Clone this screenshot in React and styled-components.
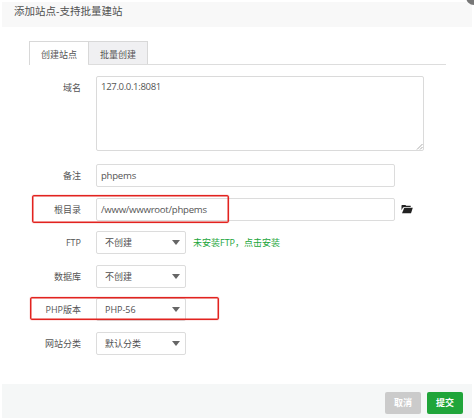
import styled, { createGlobalStyle } from "styled-components";

const selects = [
    { label: "FTP", value: "不创建", tip: "未安装FTP，点击安装" },
    { label: "数据库", value: "不创建" },
    { label: "PHP版本", value: "PHP-56", marked: true },
    { label: "网站分类", value: "默认分类" },
];

function App() {
    return (
        <>
            <GlobalStyle />
            <Dialog>
                <CloseButton />
                <DialogTitle>
                    <TitleText>添加站点-支持批量建站</TitleText>
                </DialogTitle>
                <DialogBody>
                    <TabList>
                        <Tab $active>创建站点</Tab>
                        <Tab>批量创建</Tab>
                    </TabList>
                    <Row $height={88}>
                        <Label>域名</Label>
                        <DomainArea>
                            <LatinText $spacing={-0.36}>127.0.0.1:8081</LatinText>
                            <ResizeGrip viewBox="0 0 7 7">
                                <path d="M1 6.5 6.5 1M4 6.5 6.5 4" />
                            </ResizeGrip>
                        </DomainArea>
                    </Row>
                    <Row $height={33.6}>
                        <Label>备注</Label>
                        <Input>
                            <LatinText $spacing={-0.25}>phpems</LatinText>
                        </Input>
                    </Row>
                    <Row $height={33.6}>
                        <Label>根目录</Label>
                        <Input>
                            <LatinText $spacing={-0.25}>/www/wwwroot/phpems</LatinText>
                        </Input>
                        <FolderIcon viewBox="0 0 12 10">
                            <path d="M0.5 6.3V1.5L1 .9H4.4L5.2 1.8H9.7V3H3.1L1.8 3.7Z" />
                            <path d="M3.3 3.7H11.8L10 9.2H1Z" />
                        </FolderIcon>
                        <Marker $left={3} $top={-3} $width={197} $height={28} />
                    </Row>
                    {selects.map((item) => (
                        <Row key={item.label} $height={33.6}>
                            <Label>{item.label}</Label>
                            <Select>
                                {item.value}
                                <Arrow />
                            </Select>
                            {item.tip && <Tip>{item.tip}</Tip>}
                            {item.marked && (
                                <Marker $left={1} $top={-1} $width={189} $height={23} />
                            )}
                        </Row>
                    ))}
                </DialogBody>
                <Footer>
                    <Button $color="#cbcbcb">取消</Button>
                    <Button $color="#20a53a">提交</Button>
                </Footer>
            </Dialog>
        </>
    );
}

const GlobalStyle = createGlobalStyle`
    * {
        box-sizing: border-box;
    }

    body {
        margin: 0;
        background: #fff;
        color: #555;
        font-family: "Open Sans", "Noto Sans CJK SC", sans-serif;
        font-size: 9px;
        overflow: hidden;
    }
`;

const Dialog = styled.div`
    position: relative;
    width: 474px;
    height: 420px;
    padding: 2px;
    overflow: hidden;
    display: flex;
    flex-direction: column;
`;

const CloseButton = styled.div`
    position: absolute;
    top: -11px;
    right: -8px;
    width: 16px;
    height: 16px;
    border-radius: 50%;
    background: #777;
`;

const DialogTitle = styled.div`
    height: 25px;
    padding-left: 12px;
    background: #f8f8f8;
`;

const TitleText = styled.div`
    font-size: 10.5px;
    line-height: 19px;
    color: #505050;
`;

const DialogBody = styled.div`
    flex: 1;
    padding: 14px 26px 0 27px;
`;

const TabList = styled.div`
    display: flex;
    height: 24px;
    margin-bottom: 11px;
    border-bottom: 1px solid #ddd;
`;

const Tab = styled.div`
    width: ${(props) => (props.$active ? 59 : 60)}px;
    height: ${(props) => (props.$active ? 24 : 23)}px;
    border: 1px solid #d8d8d8;
    border-width: ${(props) => (props.$active ? "1px 0 0 1px" : "1px 1px 0 1px")};
    background: ${(props) => (props.$active ? "#fff" : "#f0f0f2")};
    line-height: 25px;
    text-align: center;
`;

const Row = styled.div`
    position: relative;
    display: flex;
    align-items: flex-start;
    height: ${(props) => props.$height}px;
`;

const Label = styled.div`
    width: 52px;
    margin-right: 15px;
    line-height: 24px;
    text-align: right;
`;

const DomainArea = styled.div`
    position: relative;
    width: 328px;
    height: 75px;
    padding: 4px;
    border: 1px solid #dadada;
    border-radius: 2px;
    line-height: 12px;
`;

const Input = styled.div`
    width: 299px;
    height: 23px;
    padding-left: 4px;
    border: 1px solid #dcdcdc;
    border-radius: 2px;
    line-height: 21px;
`;

const LatinText = styled.span`
    font-size: 9.6px;
    letter-spacing: ${(props) => props.$spacing || 0}px;
`;

const ResizeGrip = styled.svg`
    position: absolute;
    right: 0;
    bottom: 0;
    width: 7px;
    height: 7px;
    fill: none;
    stroke: #888;
    stroke-width: 0.7;
`;

const FolderIcon = styled.svg`
    width: 12px;
    height: 10px;
    margin: 6px 0 0 6px;
    fill: #222;
`;

const Select = styled.div`
    display: flex;
    align-items: center;
    justify-content: space-between;
    width: 90px;
    height: 23px;
    padding: 0 4px 0 8px;
    border: 1px solid #dcdcdc;
    border-radius: 2px;
    color: #505050;
    line-height: 21px;
`;

const Arrow = styled.span`
    border: 4px solid transparent;
    border-top: 5px solid #666;
    border-bottom: 0;
    margin-right: 1px;
`;

const Tip = styled.div`
    margin-left: 7px;
    color: #20a53a;
    line-height: 24px;
`;

const Marker = styled.div`
    position: absolute;
    left: ${(props) => props.$left}px;
    top: ${(props) => props.$top}px;
    width: ${(props) => props.$width}px;
    height: ${(props) => props.$height}px;
    border: 1px solid #e2231f;
    border-radius: 2px;
    box-shadow: inset 0 0 0 0.5px #e2231f, 0 0 1px #e2231f;
`;

const Footer = styled.div`
    display: flex;
    justify-content: flex-end;
    gap: 6px;
    height: 34px;
    padding: 8px 9px 0 0;
    background: #f5f7f7;
`;

const Button = styled.div`
    width: 36px;
    height: 22px;
    border-radius: 2px;
    background: ${(props) => props.$color};
    color: #fff;
    font-weight: bold;
    line-height: 22px;
    text-align: center;
`;

export default App;
